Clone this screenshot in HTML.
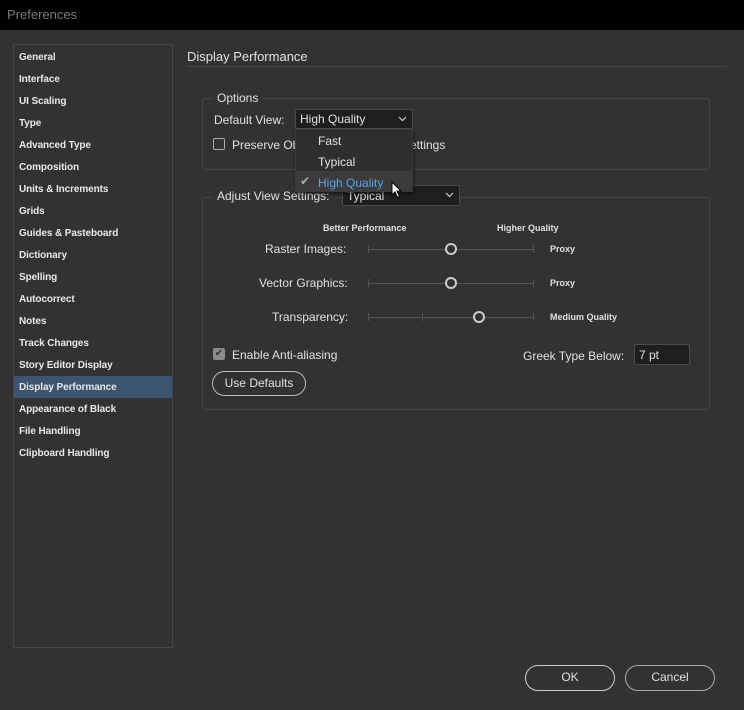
<!DOCTYPE html>
<html><head><style>
*{margin:0;padding:0;box-sizing:border-box}
body{width:744px;height:710px;background:#323232;font-family:"Liberation Sans",sans-serif;color:#dcdcdc;position:relative;overflow:hidden}
.a{position:absolute;white-space:nowrap}
.title{left:0;top:0;width:744px;height:30px;background:#000;color:#7a7a7a;font-size:13px;padding:7px 0 0 7px}
.side{left:13px;top:44px;width:160px;height:604px;border:1px solid #464646}
.it{position:absolute;left:5px;font-size:10px;font-weight:bold;color:#e8e8e8;letter-spacing:-0.1px}
.sel{position:absolute;left:0;top:331px;width:158px;height:22px;background:#3c5470}
.box{border:1px solid #454545;border-radius:3px}
.dd{background:#1e1e1e;border:1px solid #4a4a4a;border-radius:2px;font-size:12px;padding:3px 4px;color:#e0e0e0}
.lbl{font-size:12px;color:#e0e0e0}
.sm{font-size:9px;font-weight:bold;color:#e0e0e0}
.track{height:1px;background:#555}
.knob{width:12px;height:12px;border:2px solid #ccc;border-radius:50%;background:#323232}
.btn{border:1.5px solid #bbb;border-radius:14px;font-size:12px;text-align:center;color:#e0e0e0}
.chev{position:absolute;right:5px;top:6px}
</style></head><body>
<div class="a title">Preferences</div>
<div class="a side">
<div class="sel"></div>
<div class="it" style="top:7px">General</div>
<div class="it" style="top:29px">Interface</div>
<div class="it" style="top:51px">UI Scaling</div>
<div class="it" style="top:73px">Type</div>
<div class="it" style="top:95px">Advanced Type</div>
<div class="it" style="top:117px">Composition</div>
<div class="it" style="top:139px">Units &amp; Increments</div>
<div class="it" style="top:161px">Grids</div>
<div class="it" style="top:183px">Guides &amp; Pasteboard</div>
<div class="it" style="top:205px">Dictionary</div>
<div class="it" style="top:227px">Spelling</div>
<div class="it" style="top:249px">Autocorrect</div>
<div class="it" style="top:271px">Notes</div>
<div class="it" style="top:293px">Track Changes</div>
<div class="it" style="top:315px">Story Editor Display</div>
<div class="it" style="top:337px">Display Performance</div>
<div class="it" style="top:359px">Appearance of Black</div>
<div class="it" style="top:381px">File Handling</div>
<div class="it" style="top:403px">Clipboard Handling</div>
</div>
<div class="a lbl" style="left:187px;top:49px;font-size:13px">Display Performance</div>
<div class="a" style="left:187px;top:66px;width:540px;height:1px;background:#454545"></div>

<div class="a box" style="left:202px;top:98px;width:508px;height:72px"></div>
<div class="a lbl" style="left:212px;top:91px;background:#323232;padding:0 5px">Options</div>
<div class="a lbl" style="left:214px;top:113px">Default View:</div>
<div class="a dd" style="left:295px;top:109px;width:118px;height:20px;padding-top:2px">High Quality<svg class="chev" width="9" height="6" viewBox="0 0 9 6"><path d="M1 1 L4.5 4.5 L8 1" fill="none" stroke="#ccc" stroke-width="1.2"/></svg></div>
<div class="a" style="left:213px;top:138px;width:12px;height:12px;border:1px solid #aaa;border-radius:2px"></div>
<div class="a lbl" style="left:232px;top:138px">Preserve Ob</div>
<div class="a lbl" style="left:410px;top:138px">ettings</div>

<div class="a box" style="left:202px;top:197px;width:508px;height:213px"></div>
<div class="a lbl" style="left:212px;top:189px;background:#323232;padding:0 5px">Adjust View Settings:</div>
<div class="a dd" style="left:342px;top:185px;width:118px;height:21px">Typical<svg class="chev" width="9" height="6" viewBox="0 0 9 6"><path d="M1 1 L4.5 4.5 L8 1" fill="none" stroke="#ccc" stroke-width="1.2"/></svg></div>

<div class="a" style="left:295px;top:129px;width:118px;height:63px;background:#2e2e2e;border:1px solid #3a3a3a;box-shadow:1px 2px 3px rgba(0,0,0,.5)"></div>
<div class="a lbl" style="left:318px;top:134px">Fast</div>
<div class="a lbl" style="left:318px;top:155px">Typical</div>
<div class="a" style="left:296px;top:171px;width:116px;height:21px;background:#3b3b3b"></div>
<div class="a lbl" style="left:300px;top:174px;color:#aaa">&#10004;</div>
<div class="a lbl" style="left:318px;top:176px;color:#5aa0e8">High Quality</div>
<svg class="a" style="left:391px;top:181px" width="12" height="18" viewBox="0 0 12 18"><path d="M1 1 L1 14 L4 11 L6.5 16.5 L8.5 15.5 L6 10 L10 10 Z" fill="#fff" stroke="#000" stroke-width="1"/></svg>

<div class="a sm" style="left:323px;top:223px">Better Performance</div>
<div class="a sm" style="left:497px;top:223px">Higher Quality</div>

<div class="a lbl" style="left:265px;top:242px">Raster Images:</div>
<div class="a track" style="left:368px;top:249px;width:165px"></div>
<div class="a" style="left:368px;top:245px;width:1px;height:8px;background:#555"></div>
<div class="a" style="left:533px;top:245px;width:1px;height:8px;background:#555"></div>
<div class="a knob" style="left:445px;top:243px"></div>
<div class="a sm" style="left:550px;top:244px">Proxy</div>

<div class="a lbl" style="left:259px;top:276px">Vector Graphics:</div>
<div class="a track" style="left:368px;top:283px;width:165px"></div>
<div class="a" style="left:368px;top:279px;width:1px;height:8px;background:#555"></div>
<div class="a" style="left:533px;top:279px;width:1px;height:8px;background:#555"></div>
<div class="a knob" style="left:445px;top:277px"></div>
<div class="a sm" style="left:550px;top:278px">Proxy</div>

<div class="a lbl" style="left:272px;top:310px">Transparency:</div>
<div class="a track" style="left:368px;top:317px;width:165px"></div>
<div class="a" style="left:368px;top:313px;width:1px;height:8px;background:#555"></div>
<div class="a" style="left:422px;top:313px;width:1px;height:8px;background:#555"></div>
<div class="a" style="left:533px;top:313px;width:1px;height:8px;background:#555"></div>
<div class="a knob" style="left:473px;top:311px"></div>
<div class="a sm" style="left:550px;top:312px">Medium Quality</div>

<div class="a" style="left:213px;top:348px;width:12px;height:12px;background:#8a8a8a;border-radius:2px;color:#333;font-size:10px;line-height:12px;text-align:center">&#10004;</div>
<div class="a lbl" style="left:232px;top:348px">Enable Anti-aliasing</div>
<div class="a lbl" style="left:523px;top:349px">Greek Type Below:</div>
<div class="a dd" style="left:634px;top:344px;width:56px;height:21px">7 pt</div>
<div class="a btn" style="left:212px;top:371px;width:94px;height:25px;line-height:22px">Use Defaults</div>

<div class="a btn" style="left:525px;top:665px;width:90px;height:26px;line-height:23px;border-color:#ccc">OK</div>
<div class="a btn" style="left:625px;top:665px;width:90px;height:26px;line-height:23px;border-color:#aaa">Cancel</div>
</body></html>
